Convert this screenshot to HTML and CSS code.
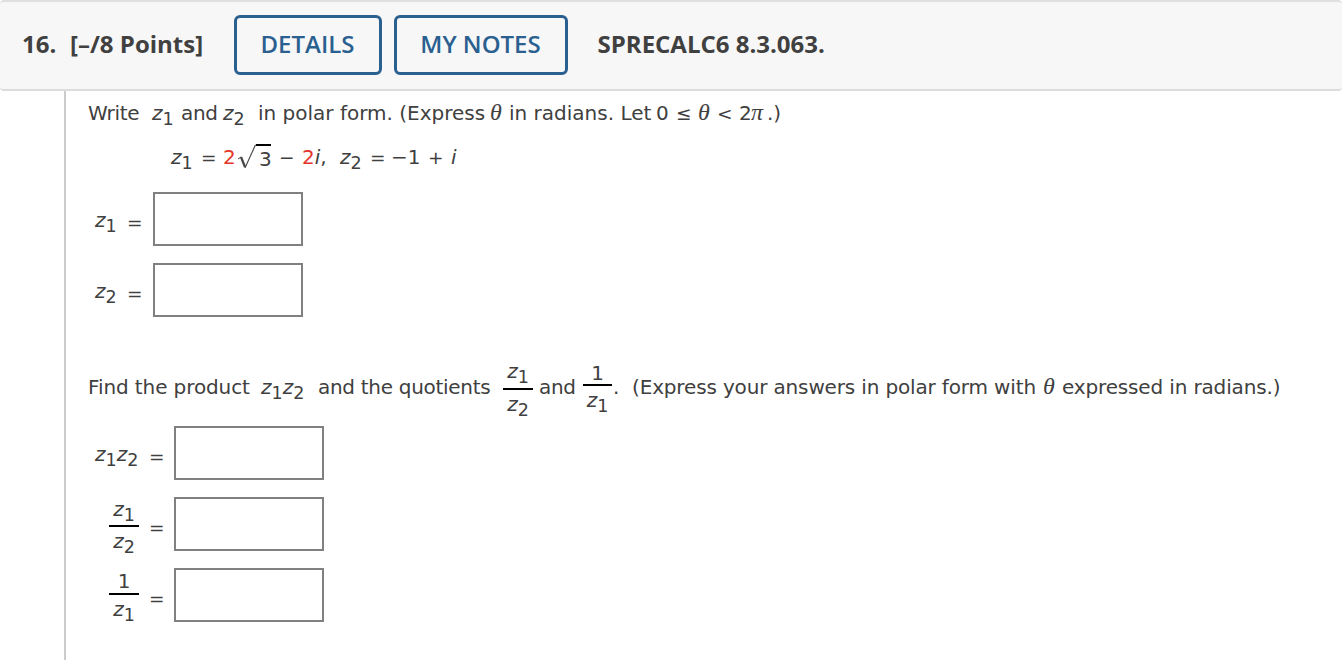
FILE: index.html
```html
<!DOCTYPE html>
<html lang="en">
<head>
  <meta charset="UTF-8">
  <meta name="viewport" content="width=device-width, initial-scale=1.0">
  <title>SPRECALC6 8.3.063</title>
  <link rel="stylesheet" href="styles.css">
</head>
<body>

  <header class="question-header">
    <span class="number">16.</span>
    <span class="points">[–/8 Points]</span>
    <button type="button" class="btn details">DETAILS</button>
    <button type="button" class="btn notes">MY NOTES</button>
    <span class="source">SPRECALC6 8.3.063.</span>
  </header>

  <main class="question-body">
    <div class="line prompt">
      <span class="write">Write</span>
      <span><i>z</i><sub>1</sub></span>
      <span class="and">and</span>
      <span><i>z</i><sub>2</sub></span>
      <span>in polar form. (Express</span>
      <span class="greek">θ</span>
      <span>in radians. Let</span>
      <span>0</span>
      <span class="op">≤</span>
      <span class="greek">θ</span>
      <span class="op">&lt;</span>
      <span>2</span>
      <span class="greek pi">π</span>
      <span>.)</span>
    </div>

    <div class="line given">
      <span><i>z</i><sub>1</sub></span>
      <span class="op">=</span>
      <span class="red">2</span>
      <span class="root">
        <svg width="18" height="24" viewBox="0 0 18 24" fill="none" stroke="#444">
          <path d="M0 15L3 13" stroke-width="1"/>
          <path d="M3 13L7 23" stroke-width="2.2"/>
          <path d="M7 24L17.5 .8" stroke-width="1.1"/>
        </svg>
        <span class="radicand">3</span>
      </span>
      <span class="op">−</span>
      <span><span class="red">2</span><i>i</i>,</span>
      <span><i>z</i><sub>2</sub></span>
      <span class="op">=</span>
      <span>−1</span>
      <span class="op">+</span>
      <i>i</i>
    </div>

    <div class="answers">
      <div class="row">
        <label for="z1"><i>z</i><sub>1</sub></label>
        <span class="eq">=</span>
        <input type="text" id="z1">
      </div>
      <div class="row">
        <label for="z2"><i>z</i><sub>2</sub></label>
        <span class="eq">=</span>
        <input type="text" id="z2">
      </div>
    </div>

    <div class="find">
      <span class="product">Find the product</span>
      <span><i>z</i><sub>1</sub><i>z</i><sub>2</sub></span>
      <span class="quotients">and the quotients</span>
      <span class="frac">
        <span class="top"><i>z</i><sub>1</sub></span>
        <span class="bottom"><i>z</i><sub>2</sub></span>
      </span>
      <span class="and">and</span>
      <span class="frac one">
        <span class="top">1</span>
        <span class="bottom"><i>z</i><sub>1</sub></span>
      </span>
      <span>.</span>
      <span class="note">(Express your answers in polar form with</span>
      <span class="greek">θ</span>
      <span class="note">expressed in radians.)</span>
    </div>

    <div class="answers wide">
      <div class="row">
        <label for="product"><i>z</i><sub>1</sub><i>z</i><sub>2</sub></label>
        <span class="eq">=</span>
        <input type="text" id="product">
      </div>
      <div class="row">
        <label for="quotient" class="frac">
          <span class="top"><i>z</i><sub>1</sub></span>
          <span class="bottom"><i>z</i><sub>2</sub></span>
        </label>
        <span class="eq">=</span>
        <input type="text" id="quotient">
      </div>
      <div class="row">
        <label for="inverse" class="frac one">
          <span class="top">1</span>
          <span class="bottom"><i>z</i><sub>1</sub></span>
        </label>
        <span class="eq">=</span>
        <input type="text" id="inverse">
      </div>
    </div>
  </main>

</body>
</html>
```
FILE: styles.css
```css
* {
  box-sizing: border-box;
}

body {
  margin: 0;
  height: 660px;
  overflow: hidden;
  background: #fff;
  color: #404040;
  font: 20px/24px Verdana, "DejaVu Sans", sans-serif;
}

/* header bar */
.question-header {
  display: flex;
  align-items: center;
  height: 91px;
  padding: 0 22px 2px;
  border-top: 2px solid #e0e0e0;
  border-bottom: 2px solid #dcdcdc;
  border-radius: 4px;
  background: #f7f7f7;
  font: bold 24px/32px "Open Sans", sans-serif;
  white-space: nowrap;
}

.question-header span {
  padding-bottom: 2px;
}

.number {
  width: 48px;
}

.points {
  width: 164px;
}

.btn {
  height: 60px;
  padding: 0 1px 2px 0;
  border: 3px solid #2a6090;
  border-radius: 6px;
  background: transparent;
  color: #2a6090;
  font: 600 24px/32px "Open Sans", sans-serif;
}

.details {
  width: 148px;
  margin-right: 12px;
}

.notes {
  width: 174px;
  margin-right: 29.5px;
}

/* question */
.question-body {
  height: 569px;
  margin-left: 64px;
  padding: 10px 0 0 22px;
  border-left: 2px solid #ccc;
}

sub {
  font-size: 17.5px;
  line-height: 0;
  vertical-align: -5px;
}

.red {
  color: #e5352b;
}

.greek {
  font: italic 24px/24px "Liberation Serif", serif;
}

.line .greek {
  line-height: 20px;
}

.op {
  font-size: 18.5px;
}

.and {
  letter-spacing: -.3px;
}

.line,
.find {
  display: grid;
  white-space: nowrap;
}

.line {
  height: 24px;
  align-items: baseline;
}

.prompt {
  grid-template-columns: 64px 29px 42px 35px 232px 19px 147px 20px 22px 19px 22px 12px 16px 20px;
}

.write {
  letter-spacing: -.3px;
}

.given {
  grid-template-columns: 30px 22px 15px 41px 23px 38px 30px 21px 37px 23px 10px;
  margin: 20px 0 0 83px;
}

.root {
  display: flex;
  align-self: start;
  height: 24px;
}

.root svg {
  margin-top: -1px;
}

.radicand {
  width: 15px;
  height: 24px;
  padding: 1px 0 0 3px;
  margin-top: -1px;
  border-top: 2px solid #000;
}

/* answer boxes */
.answers {
  display: flex;
  flex-direction: column;
  gap: 17px;
  margin: 23px 0 0 7px;
}

.row {
  display: grid;
  grid-template-columns: 32px 26px 150px;
  height: 54px;
}

.wide .row {
  grid-template-columns: 54px 25px 150px;
}

.row label {
  margin-top: 16px;
}

.row .eq {
  margin-top: 19px;
  font-size: 18.5px;
}

.row input {
  width: 150px;
  height: 54px;
  border: 2px solid #808080;
  background: #fff;
}

.frac {
  display: flex;
  flex-direction: column;
  width: 30px;
  text-align: center;
}

.frac .top {
  height: 30px;
  padding-top: 1px;
}

.frac .bottom {
  padding-top: 2px;
  border-top: 2px solid #000;
}

.find {
  grid-template-columns: 173px 57px 185px 36px 44px 30px 19px 411px 19px 220px;
  height: 60px;
  margin-top: 41px;
  align-items: start;
}

.find > span {
  margin-top: 17px;
}

.find > .greek {
  margin-top: 16px;
}

.find > .frac {
  margin-top: 0;
}

.find > .one {
  width: 29px;
  margin-top: 3px;
}

.product {
  letter-spacing: -.1px;
}

.quotients {
  letter-spacing: -.3px;
}

.note {
  letter-spacing: -.15px;
}

.one .top {
  height: 23px;
  padding-top: 0;
}

.wide {
  margin-top: 8px;
}

.wide .frac {
  margin: -1px 0 0 14px;
}

.wide .frac .top {
  height: 29px;
}

.wide .one {
  margin-top: 1px;
}

.wide .one .top {
  height: 24px;
}
```
